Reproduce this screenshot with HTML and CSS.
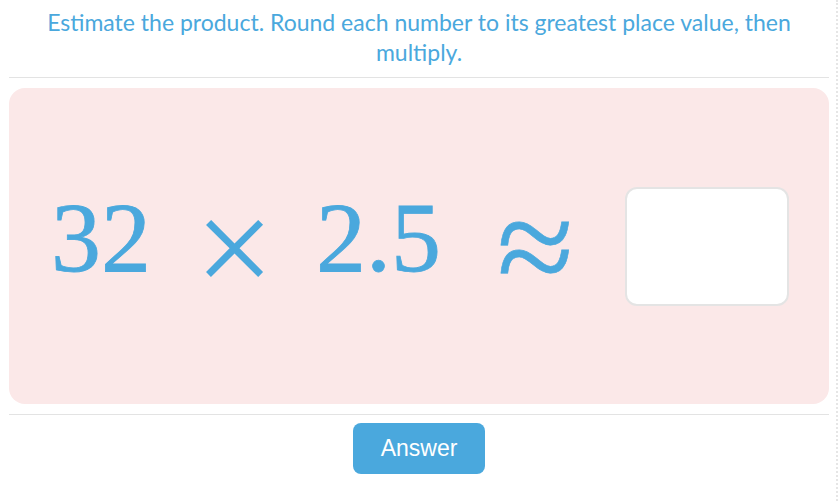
FILE: index.html
```html
<!DOCTYPE html>
<html>
<head>
<meta charset="utf-8">
<link rel="stylesheet" href="styles.css">
</head>
<body>
<div class="page">
  <p class="prompt">Estimate the product. Round each number to its greatest place value, then multiply.</p>
  <div class="rule"></div>
  <div class="card">
    <span class="num">32</span>
    <span class="op times">×</span>
    <span class="num">2.5</span>
    <span class="op approx">≈</span>
    <div class="answer-box"></div>
  </div>
  <div class="rule"></div>
  <div class="actions">
    <button class="btn">Answer</button>
  </div>
</div>
</body>
</html>
```
FILE: styles.css
```css
html, body {
  margin: 0;
  padding: 0;
  background: #ffffff;
}
body {
  width: 840px;
  height: 501px;
  overflow: hidden;
}
.page {
  width: 838px;
  height: 501px;
  border-right: 2px dotted #e6e6e6;
  box-sizing: border-box;
  padding: 7px 0 0 9px;
}
.prompt {
  margin: 0;
  width: 820px;
  text-align: center;
  font-family: "Lato", "Open Sans", sans-serif;
  font-size: 23px;
  line-height: 30px;
  color: #4aa8dd;
}
.rule {
  width: 820px;
  height: 1px;
  background: #e3e3e3;
  margin: 10px 0;
}
.card {
  width: 820px;
  height: 316px;
  background: #fbe8e8;
  border-radius: 16px;
  display: flex;
  align-items: center;
  box-sizing: border-box;
  padding-left: 42px;
  font-family: "Liberation Serif", "Times New Roman", serif;
  color: #4aa8dd;
}
.num {
  font-size: 100px;
  line-height: 1;
  margin-top: -16px;
  -webkit-text-stroke: 0.8px #4aa8dd;
}
.op {
  line-height: 1;
}
.times {
  font-size: 140px;
  margin: 4px 42px 0 44px;
}
.approx {
  font-size: 140px;
  margin: 2px 51px 0 56px;
  -webkit-text-stroke: 0.6px #4aa8dd;
}
.answer-box {
  width: 164px;
  height: 119px;
  box-sizing: border-box;
  background: #ffffff;
  border: 2px solid #e4e4e4;
  border-radius: 12px;
}
.actions {
  width: 820px;
  display: flex;
  justify-content: center;
  margin-top: -2px;
}
.btn {
  width: 132px;
  height: 51px;
  border: none;
  border-radius: 8px;
  background: #4aa8dd;
  color: #ffffff;
  font-family: "Liberation Sans", Arial, sans-serif;
  font-size: 23px;
  padding: 0;
}
```
